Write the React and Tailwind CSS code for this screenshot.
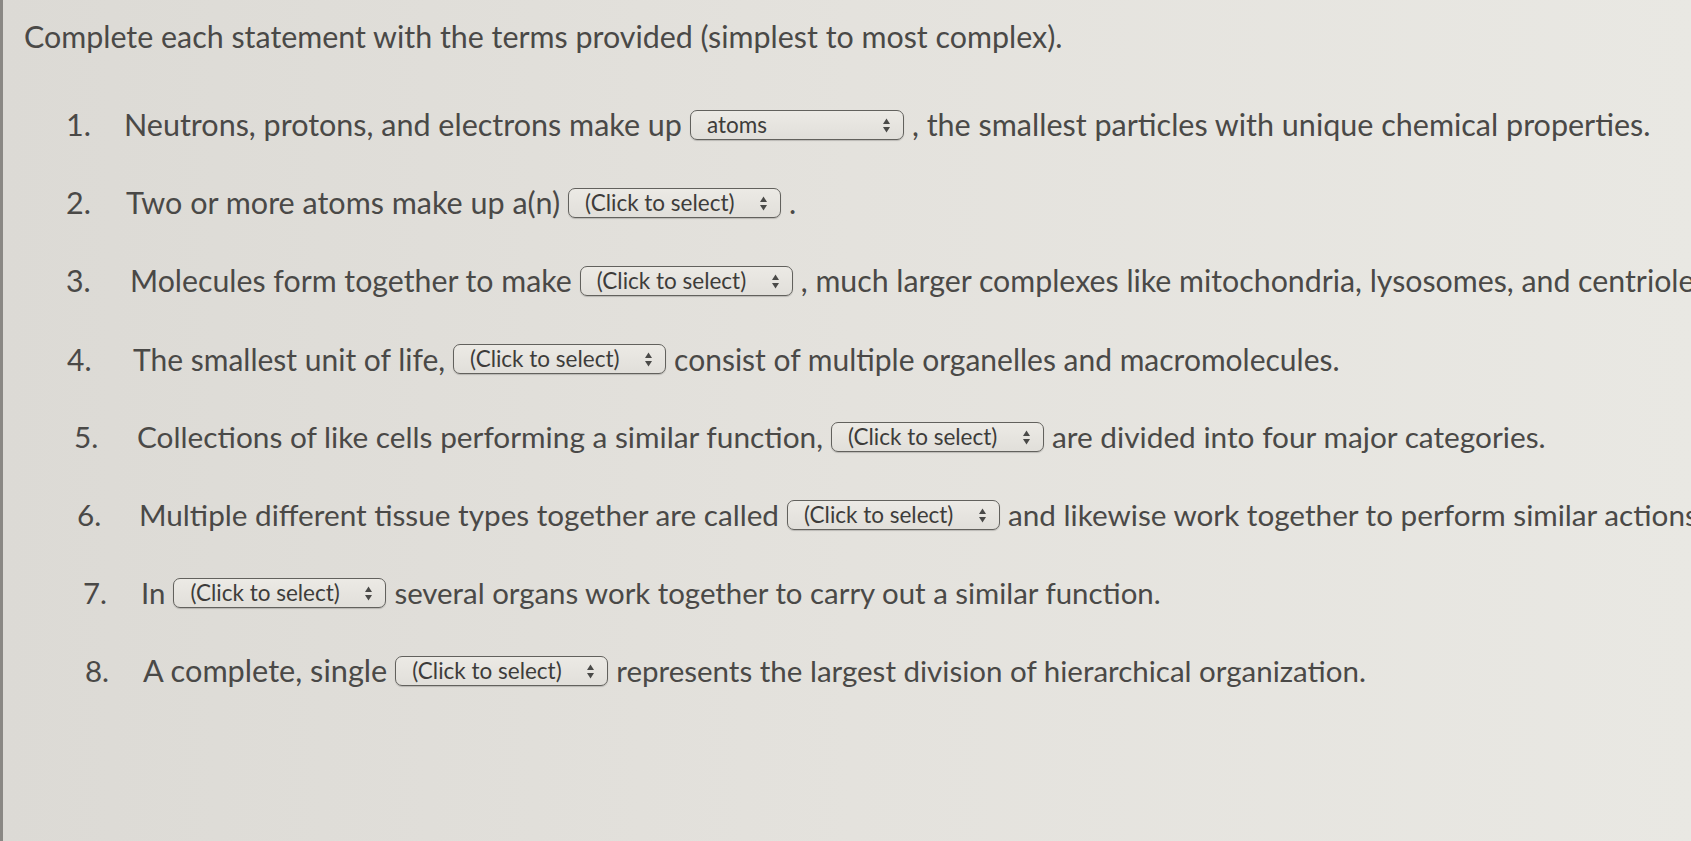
import React from "react";

function Arrows() {
  return (
    <svg width="9" height="15" viewBox="0 0 9 15" className="shrink-0">
      <path d="M4.5 0.5 L8 6 L1 6 Z" fill="#4a4a48" />
      <path d="M4.5 14.5 L8 9 L1 9 Z" fill="#4a4a48" />
    </svg>
  );
}

function Select({ label, width = "w-[213px]" }) {
  return (
    <span
      className={`inline-flex shrink-0 items-center justify-between ${width} h-[30px] mx-[8px] pl-[16px] pr-[12px] rounded-[7px] border-[1.5px] border-[#62615d] bg-gradient-to-b from-[#eceae5] to-[#e1dfda] text-[22.5px] text-[#3d3c3a] shadow-[0_1px_1px_rgba(0,0,0,0.18)]`}
    >
      <span className="leading-none">{label}</span>
      <Arrows />
    </span>
  );
}

const rows = [
  { n: "1.", pl: "pl-[63px]", nw: "w-[58px]", fs: "text-[30.5px]", bfs: "", before: "Neutrons, protons, and electrons make up", sel: "atoms", after: ", the smallest particles with unique chemical properties." },
  { n: "2.", pl: "pl-[63px]", nw: "w-[60px]", fs: "text-[30.5px]", bfs: "", before: "Two or more atoms make up a(n)", sel: "(Click to select)", after: "." },
  { n: "3.", pl: "pl-[63px]", nw: "w-[64px]", fs: "text-[30.3px]", bfs: "", before: "Molecules form together to make", sel: "(Click to select)", after: ", much larger complexes like mitochondria, lysosomes, and centrioles." },
  { n: "4.", pl: "pl-[64px]", nw: "w-[66px]", fs: "text-[30px]", bfs: "", before: "The smallest unit of life,", sel: "(Click to select)", after: "consist of multiple organelles and macromolecules." },
  { n: "5.", pl: "pl-[71px]", nw: "w-[63px]", fs: "text-[29.8px]", bfs: "", before: "Collections of like cells performing a similar function,", sel: "(Click to select)", after: "are divided into four major categories." },
  { n: "6.", pl: "pl-[74px]", nw: "w-[62px]", fs: "text-[29.7px]", bfs: "", before: "Multiple different tissue types together are called", sel: "(Click to select)", after: "and likewise work together to perform similar actions." },
  { n: "7.", pl: "pl-[80px]", nw: "w-[58px]", fs: "text-[29.4px]", bfs: "", before: "In", sel: "(Click to select)", after: "several organs work together to carry out a similar function." },
  { n: "8.", pl: "pl-[82px]", nw: "w-[58px]", fs: "text-[29.5px]", bfs: "text-[30.7px]", before: "A complete, single", sel: "(Click to select)", after: "represents the largest division of hierarchical organization." },
];

export default function App() {
  return (
    <div
      className="w-[1691px] h-[841px] overflow-hidden border-l-[3px] border-[#8a8884] bg-gradient-to-r from-[#dcdad5] via-[#e4e2dd] to-[#e9e8e3] text-[#4a4947]"
      style={{ fontFamily: "Lato, 'Open Sans', sans-serif" }}
    >
      <div className="pl-[21px] pt-[19px] text-[30.4px] leading-[34px] whitespace-nowrap">
        Complete each statement with the terms provided (simplest to most complex).
      </div>
      <div className="flex flex-col gap-[46px] pt-[56px]">
        {rows.map((r) => (
          <div key={r.n} className={`flex items-center h-[32px] whitespace-nowrap ${r.fs} ${r.pl}`}>
            <span className={`${r.nw} shrink-0`}>{r.n}</span>
            <span className={`shrink-0 ${r.bfs}`}>{r.before}</span>
            <Select label={r.sel} width={r.sel === "atoms" ? "w-[214px]" : "w-[213px]"} />
            <span className="shrink-0">{r.after}</span>
          </div>
        ))}
      </div>
    </div>
  );
}
